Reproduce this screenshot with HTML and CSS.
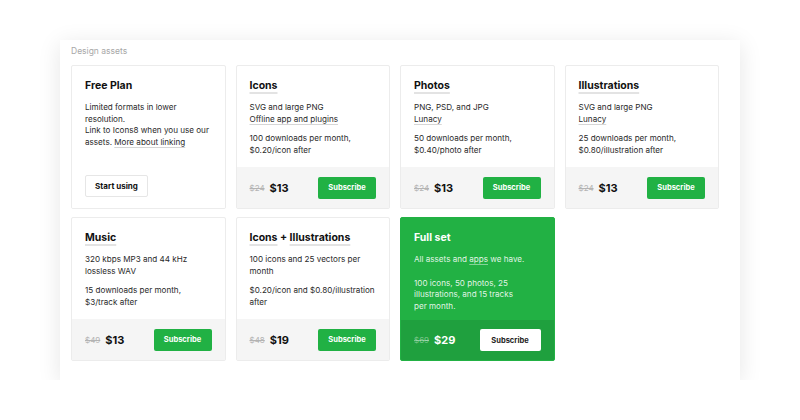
FILE: index.html
```html
<!DOCTYPE html>
<html>
<head>
<meta charset="utf-8">
<link rel="stylesheet" href="styles.css">
</head>
<body>
<div class="panel">
  <div class="label">Design assets</div>
  <div class="grid">
    <div class="card">
      <div class="body">
        <div class="title plain">Free Plan</div>
        <p>Limited formats in lower resolution.<br>Link to Icons8 when you use our assets. <span class="link">More about linking</span></p>
      </div>
      <div class="foot plainfoot"><button class="btn ghost">Start using</button></div>
    </div>
    <div class="card">
      <div class="body">
        <div class="title"><span class="u">Icons</span></div>
        <p>SVG and large PNG<br><span class="link">Offline app and plugins</span></p>
        <p>100 downloads per month,<br>$0.20/icon after</p>
      </div>
      <div class="foot"><div class="price"><s>$24</s><b>$13</b></div><button class="btn">Subscribe</button></div>
    </div>
    <div class="card">
      <div class="body">
        <div class="title"><span class="u">Photos</span></div>
        <p>PNG, PSD, and JPG<br><span class="link">Lunacy</span></p>
        <p>50 downloads per month,<br>$0.40/photo after</p>
      </div>
      <div class="foot"><div class="price"><s>$24</s><b>$13</b></div><button class="btn">Subscribe</button></div>
    </div>
    <div class="card">
      <div class="body">
        <div class="title"><span class="u">Illustrations</span></div>
        <p>SVG and large PNG<br><span class="link">Lunacy</span></p>
        <p>25 downloads per month,<br>$0.80/illustration after</p>
      </div>
      <div class="foot"><div class="price"><s>$24</s><b>$13</b></div><button class="btn">Subscribe</button></div>
    </div>
    <div class="card">
      <div class="body">
        <div class="title"><span class="u">Music</span></div>
        <p>320 kbps MP3 and 44 kHz<br>lossless WAV</p>
        <p>15 downloads per month,<br>$3/track after</p>
      </div>
      <div class="foot"><div class="price"><s>$49</s><b>$13</b></div><button class="btn">Subscribe</button></div>
    </div>
    <div class="card">
      <div class="body">
        <div class="title"><span class="u">Icons</span> + <span class="u">Illustrations</span></div>
        <p>100 icons and 25 vectors per<br>month</p>
        <p>$0.20/icon and $0.80/illustration<br>after</p>
      </div>
      <div class="foot"><div class="price"><s>$48</s><b>$19</b></div><button class="btn">Subscribe</button></div>
    </div>
    <div class="card full">
      <div class="body">
        <div class="title plain">Full set</div>
        <p>All assets and <span class="link">apps</span> we have.</p>
        <p class="gap">100 icons, 50 photos, 25<br>illustrations, and 15 tracks<br>per month.</p>
      </div>
      <div class="foot"><div class="price"><s>$69</s><b>$29</b></div><button class="btn white">Subscribe</button></div>
    </div>
  </div>
</div>
</body>
</html>
```

FILE: styles.css
```css
* { box-sizing: border-box; }
html, body { margin: 0; padding: 0; background: #fff; }
body { font-family: Inter, "Noto Sans", sans-serif; color: #222; }

.panel {
  margin: 40px 0 0 60px;
  width: 680px;
  height: 340px;
  background: #fff;
  box-shadow: 0 4px 22px rgba(0, 0, 0, 0.1);
  padding: 6px 11px 0 11px;
}
.label {
  font-size: 8.5px;
  line-height: 11px;
  color: #a8a8a8;
  margin-bottom: 8px;
}
.grid {
  display: grid;
  grid-template-columns: repeat(4, 1fr);
  grid-auto-rows: 144px;
  gap: 8px 10px;
  width: 648px;
}
.card {
  display: flex;
  flex-direction: column;
  border: 1px solid #ececec;
  border-radius: 2px;
  background: #fff;
  overflow: hidden;
}
.body {
  flex: 1;
  padding: 13px 13px 0 13px;
}
.title {
  font-size: 10.5px;
  font-weight: 700;
  line-height: 14px;
  color: #111;
  margin-bottom: 9px;
}
.title .u {
  text-decoration: underline;
  text-decoration-color: #e3e3e3;
  text-decoration-thickness: 2px;
  text-underline-offset: 3px;
}
p {
  margin: 0 0 8px 0;
  font-size: 8.1px;
  line-height: 11.6px;
  color: #2a2a2a;
}
.link {
  text-decoration: underline;
  text-decoration-color: #d6d6d6;
  text-decoration-thickness: 1px;
  text-underline-offset: 2px;
}
.foot {
  height: 41px;
  background: #f5f5f5;
  display: flex;
  align-items: center;
  justify-content: space-between;
  padding: 0 13px 0 13px;
}
.plainfoot { background: #fff; height: 42px; justify-content: flex-start; padding-bottom: 2px; }
.price { display: flex; align-items: center; gap: 5px; }
.price s { font-size: 8px; color: #b3b3b3; }
.price b { font-size: 11px; font-weight: 700; color: #111; }
.btn {
  font-family: Inter, "Noto Sans", sans-serif;
  font-size: 7.5px;
  font-weight: 700;
  color: #fff;
  background: #21b144;
  border: none;
  border-radius: 2px;
  width: 58px;
  height: 22px;
  padding: 0;
}
.btn.ghost {
  background: #fff;
  color: #111;
  border: 1px solid #e6e6e6;
  width: 63px;
  font-size: 8px;
}
.btn.white { background: #fff; color: #222; width: 61px; }
.full { background: #22b144; border-color: #22b144; }
.full .title { color: #fff; }
.full p { color: rgba(255, 255, 255, 0.88); }
.full .link { text-decoration-color: rgba(255, 255, 255, 0.45); }
.full p.gap { margin-top: 12px; }
.full .foot { background: #1fa03e; }
.full .price s { color: rgba(255, 255, 255, 0.4); }
.full .price b { color: #fff; }
```
